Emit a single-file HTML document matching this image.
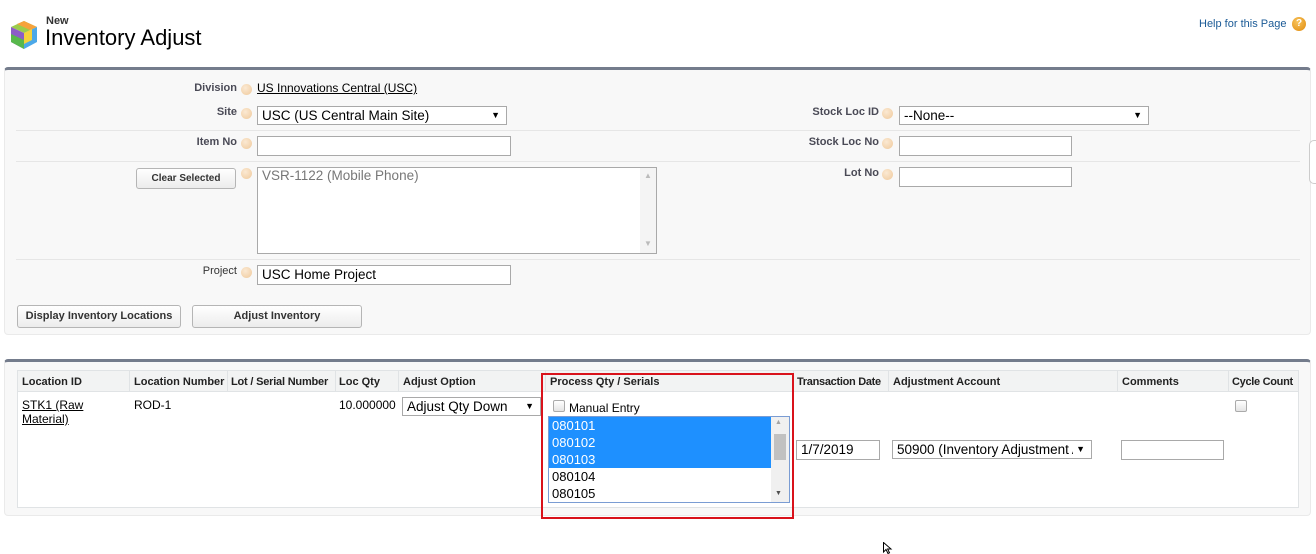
<!DOCTYPE html>
<html><head><meta charset="utf-8"><style>
*{box-sizing:border-box}
body{margin:0;width:1316px;height:553px;background:#fff;font-family:"Liberation Sans",Arial,sans-serif;position:relative;overflow:hidden;color:#000}
.a{position:absolute}
.lbl{position:absolute;font-size:11px;font-weight:bold;color:#4a4a56;text-align:right;white-space:nowrap}
.hi{position:absolute;width:11px;height:11px;border-radius:50%;background:radial-gradient(circle at 40% 35%,#fbe9d3,#efc99b)}
.inp{position:absolute;background:#fff;border:1px solid #a9a9a9;font-size:13.5px;padding:1px 4px;white-space:nowrap;overflow:hidden}
.sel{position:absolute;background:#fff;border:1px solid #a9a9a9;font-size:13.5px;padding:1px 4px;white-space:nowrap;overflow:hidden}
.sel:after{content:"▼";position:absolute;right:0;top:0;bottom:0;padding:3px 6px 0 3px;font-size:9px;background:#fff}
.btn{position:absolute;border:1px solid #b5b5b5;border-radius:3px;background:linear-gradient(#fff,#ececec);font-size:11px;font-weight:bold;color:#333;text-align:center}
.sep{position:absolute;left:16px;width:1284px;height:1px;background:#e6e6e6}
.th{position:absolute;top:376px;font-size:11px;font-weight:bold;color:#222;white-space:nowrap}
.cs{position:absolute;top:371px;width:1px;height:21px;background:#e0e3e5}
</style></head><body>
<svg class="a" style="left:10px;top:20px" width="28" height="30" viewBox="0 0 28 30">
<polygon points="14,1 27,7 14,13 1,7" fill="#9ccc4c"/>
<polygon points="14,1 27,7 20,10 7,4" fill="#f6a23c"/>
<polygon points="1,7 14,13 14,29 1,22" fill="#8c5cc8"/>
<polygon points="1,14 14,20 14,29 1,22" fill="#58b84c"/>
<polygon points="14,13 27,7 27,22 14,29" fill="#4ca8e8"/>
<polygon points="14,13 22,9 22,20 14,24" fill="#f5d23a"/>
</svg>
<div class="a" style="left:46px;top:15px;font-size:11px;font-weight:bold;color:#333">New</div>
<div class="a" style="left:45px;top:25px;font-size:22px;color:#000">Inventory Adjust</div>
<div class="a" style="left:1199px;top:18px;font-size:11px;color:#1a5a96">Help for this Page</div>
<div class="a" style="left:1292px;top:17px;width:14px;height:14px;border-radius:50%;background:radial-gradient(circle at 40% 35%,#f8c45c,#e08a0c);color:#fff;font-size:10px;font-weight:bold;text-align:center;line-height:14px">?</div>

<div class="a" style="left:4px;top:67px;width:1307px;height:268px;background:#f8f8f8;border-top:3px solid #747c8c;border-radius:4px;border-left:1px solid #eaeaea;border-right:1px solid #eaeaea;border-bottom:1px solid #eaeaea"></div>
<div class="a" style="left:1309px;top:140px;width:7px;height:44px;border:1px solid #ccc;border-right:none;border-radius:5px 0 0 5px;background:#fff"></div>
<div class="sep" style="top:130px"></div>
<div class="sep" style="top:161px"></div>
<div class="sep" style="top:259px"></div>

<div class="lbl" style="right:1079px;top:82px">Division</div><div class="hi" style="left:241px;top:84px"></div>
<div class="a" style="left:257px;top:81px;font-size:12px;text-decoration:underline;color:#000">US Innovations Central (USC)</div>
<div class="lbl" style="right:1079px;top:106px">Site</div><div class="hi" style="left:241px;top:108px"></div>
<div class="sel" style="left:257px;top:106px;width:250px;height:19px">USC (US Central Main Site)</div>
<div class="lbl" style="right:1079px;top:136px">Item No</div><div class="hi" style="left:241px;top:138px"></div>
<div class="inp" style="left:257px;top:136px;width:254px;height:20px"></div>
<div class="btn" style="left:136px;top:168px;width:100px;height:21px;line-height:19px;font-size:10px">Clear Selected</div>
<div class="hi" style="left:241px;top:168px"></div>
<div class="inp" style="left:257px;top:167px;width:400px;height:87px;color:#777;padding-top:0">VSR-1122 (Mobile Phone)</div>
<div class="a" style="left:640px;top:168px;width:16px;height:85px;background:#f4f4f4"></div>
<div class="a" style="left:644px;top:171px;font-size:8px;color:#bbb">▲</div>
<div class="a" style="left:644px;top:239px;font-size:8px;color:#bbb">▼</div>
<div class="lbl" style="right:1079px;top:265px;font-weight:normal;color:#333">Project</div><div class="hi" style="left:241px;top:267px"></div>
<div class="inp" style="left:257px;top:265px;width:254px;height:20px">USC Home Project</div>
<div class="btn" style="left:17px;top:305px;width:164px;height:23px;line-height:21px">Display Inventory Locations</div>
<div class="btn" style="left:192px;top:305px;width:170px;height:23px;line-height:21px">Adjust Inventory</div>

<div class="lbl" style="right:437px;top:106px">Stock Loc ID</div><div class="hi" style="left:882px;top:108px"></div>
<div class="sel" style="left:899px;top:106px;width:250px;height:19px">--None--</div>
<div class="lbl" style="right:437px;top:136px">Stock Loc No</div><div class="hi" style="left:882px;top:138px"></div>
<div class="inp" style="left:899px;top:136px;width:173px;height:20px"></div>
<div class="lbl" style="right:437px;top:167px">Lot No</div><div class="hi" style="left:882px;top:169px"></div>
<div class="inp" style="left:899px;top:167px;width:173px;height:20px"></div>

<div class="a" style="left:4px;top:359px;width:1307px;height:157px;background:#f8f8f8;border-top:3px solid #747c8c;border-radius:4px;border-left:1px solid #eaeaea;border-right:1px solid #eaeaea;border-bottom:1px solid #eaeaea"></div>
<div class="a" style="left:17px;top:370px;width:1282px;height:138px;background:#fff;border:1px solid #e0e3e5"></div>
<div class="a" style="left:18px;top:371px;width:1280px;height:21px;background:#f2f3f3;border-bottom:1px solid #e0e3e5"></div>
<div class="cs" style="left:129px"></div><div class="cs" style="left:227px"></div><div class="cs" style="left:335px"></div><div class="cs" style="left:398px"></div><div class="cs" style="left:545px"></div><div class="cs" style="left:793px"></div><div class="cs" style="left:888px"></div><div class="cs" style="left:1117px"></div><div class="cs" style="left:1228px"></div>
<div class="th" style="left:22px">Location ID</div>
<div class="th" style="left:134px">Location Number</div>
<div class="th" style="left:231px;letter-spacing:-0.2px">Lot / Serial Number</div>
<div class="th" style="left:339px">Loc Qty</div>
<div class="th" style="left:403px">Adjust Option</div>
<div class="th" style="left:550px">Process Qty / Serials</div>
<div class="th" style="left:797px;letter-spacing:-0.3px">Transaction Date</div>
<div class="th" style="left:893px">Adjustment Account</div>
<div class="th" style="left:1122px">Comments</div>
<div class="th" style="left:1232px;letter-spacing:-0.3px">Cycle Count</div>

<div class="a" style="left:22px;top:398px;font-size:12px;line-height:14px;text-decoration:underline">STK1 (Raw<br>Material)</div>
<div class="a" style="left:134px;top:398px;font-size:12px">ROD-1</div>
<div class="a" style="left:339px;top:398px;font-size:12px">10.000000</div>
<div class="sel" style="left:402px;top:397px;width:139px;height:19px">Adjust Qty Down</div>
<div class="a" style="left:553px;top:400px;width:12px;height:12px;border:1px solid #aaa;border-radius:2px;background:linear-gradient(#fff,#e4e4e4)"></div>
<div class="a" style="left:569px;top:401px;font-size:12px">Manual Entry</div>
<div class="a" style="left:548px;top:416px;width:242px;height:87px;border:1px solid #7a9cd3;background:#fff;font-size:13px;line-height:17px;overflow:hidden">
<div style="background:#1e90ff;color:#fff;width:222px;padding-left:3px">080101</div>
<div style="background:#1e90ff;color:#fff;width:222px;padding-left:3px">080102</div>
<div style="background:#1e90ff;color:#fff;width:222px;padding-left:3px">080103</div>
<div style="padding-left:3px">080104</div>
<div style="padding-left:3px">080105</div>
<div class="a" style="left:222px;top:0;width:18px;height:85px;background:#f0f0f0"></div>
<div class="a" style="left:225px;top:17px;width:12px;height:26px;background:#c1c1c1"></div>
<div class="a" style="left:226px;top:1px;font-size:7px;line-height:10px;color:#a3a3a3">▲</div>
<div class="a" style="left:226px;top:72px;font-size:7px;line-height:10px;color:#505050">▼</div>
</div>
<div class="a" style="left:541px;top:373px;width:253px;height:146px;border:2px solid #d9121b"></div>
<div class="inp" style="left:796px;top:440px;width:84px;height:20px">1/7/2019</div>
<div class="sel" style="left:892px;top:440px;width:200px;height:19px">50900 (Inventory Adjustment Account)</div>
<div class="inp" style="left:1121px;top:440px;width:103px;height:20px"></div>
<div class="a" style="left:1235px;top:400px;width:12px;height:12px;border:1px solid #aaa;border-radius:2px;background:linear-gradient(#fff,#e4e4e4)"></div>
<svg class="a" style="left:883px;top:542px" width="10" height="12"><path d="M0.5 0.5 L0.5 10 L3 7.5 L5 11.5 L6.5 10.8 L4.6 7 L8 7 Z" fill="#fff" stroke="#000" stroke-width="1"/></svg>
</body></html>
